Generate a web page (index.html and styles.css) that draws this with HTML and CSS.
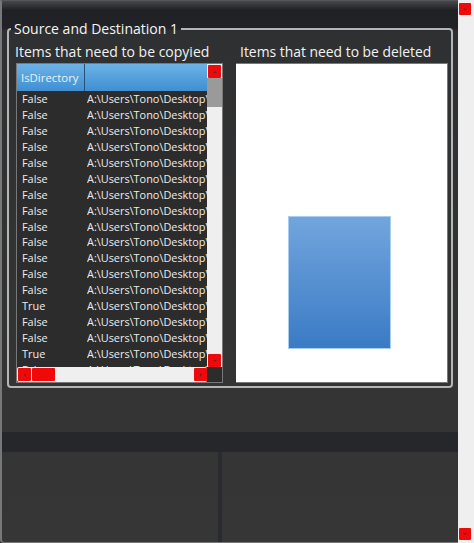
FILE: index.html
```html
<!DOCTYPE html>
<html lang="en">
<head>
<meta charset="utf-8">
<title>Source and Destination</title>
<link rel="stylesheet" href="styles.css">
</head>
<body>
<div class="window">
  <main class="pane">
    <fieldset class="group">
      <legend class="group-title">Source and Destination 1</legend>
      <section class="col col-left">
        <h2 class="col-title">Items that need to be copyied</h2>
        <div class="list">
          <div class="list-view">
            <div class="list-head">
              <div class="head-cell head-first">IsDirectory</div>
              <div class="head-cell head-rest"></div>
            </div>
            <div class="rows">
              <div class="row"><span class="c1">False</span><span class="c2">A:\Users\Tono\Desktop\</span></div>
              <div class="row"><span class="c1">False</span><span class="c2">A:\Users\Tono\Desktop\</span></div>
              <div class="row"><span class="c1">False</span><span class="c2">A:\Users\Tono\Desktop\</span></div>
              <div class="row"><span class="c1">False</span><span class="c2">A:\Users\Tono\Desktop\</span></div>
              <div class="row"><span class="c1">False</span><span class="c2">A:\Users\Tono\Desktop\</span></div>
              <div class="row"><span class="c1">False</span><span class="c2">A:\Users\Tono\Desktop\</span></div>
              <div class="row"><span class="c1">False</span><span class="c2">A:\Users\Tono\Desktop\</span></div>
              <div class="row"><span class="c1">False</span><span class="c2">A:\Users\Tono\Desktop\</span></div>
              <div class="row"><span class="c1">False</span><span class="c2">A:\Users\Tono\Desktop\</span></div>
              <div class="row"><span class="c1">False</span><span class="c2">A:\Users\Tono\Desktop\</span></div>
              <div class="row"><span class="c1">False</span><span class="c2">A:\Users\Tono\Desktop\</span></div>
              <div class="row"><span class="c1">False</span><span class="c2">A:\Users\Tono\Desktop\</span></div>
              <div class="row"><span class="c1">False</span><span class="c2">A:\Users\Tono\Desktop\</span></div>
              <div class="row"><span class="c1">True</span><span class="c2">A:\Users\Tono\Desktop\</span></div>
              <div class="row"><span class="c1">False</span><span class="c2">A:\Users\Tono\Desktop\</span></div>
              <div class="row"><span class="c1">False</span><span class="c2">A:\Users\Tono\Desktop\</span></div>
              <div class="row"><span class="c1">True</span><span class="c2">A:\Users\Tono\Desktop\</span></div>
              <div class="row"><span class="c1">False</span><span class="c2">A:\Users\Tono\Desktop\</span></div>
            </div>
            <div class="hbar">
              <span class="btn"><svg class="arrow" viewBox="0 0 6 6"><path d="M4 1 2 3l2 2z"/></svg></span>
              <span class="hthumb"></span>
              <span class="hspace"></span>
              <span class="btn"><svg class="arrow" viewBox="0 0 6 6"><path d="M2 1l2 2-2 2z"/></svg></span>
            </div>
          </div>
          <div class="list-side">
            <div class="vbar">
              <span class="btn"><svg class="arrow" viewBox="0 0 6 6"><path d="M1 4l2-2 2 2z"/></svg></span>
              <span class="vthumb"></span>
              <span class="vspace"></span>
              <span class="btn"><svg class="arrow" viewBox="0 0 6 6"><path d="M1 2l2 2 2-2z"/></svg></span>
            </div>
            <div class="corner"></div>
          </div>
        </div>
      </section>
      <section class="col col-right">
        <h2 class="col-title">Items that need to be deleted</h2>
        <div class="drop">
          <div class="drop-rect"></div>
        </div>
      </section>
    </fieldset>
  </main>
  <aside class="outer">
    <span class="btn btn-outer"><svg class="arrow" viewBox="0 0 6 6"><path d="M1 4l2-2 2 2z"/></svg></span>
    <span class="btn btn-outer"><svg class="arrow" viewBox="0 0 6 6"><path d="M1 2l2 2 2-2z"/></svg></span>
  </aside>
</div>
</body>
</html>
```

FILE: styles.css
```css
html, body {
  margin: 0;
  padding: 0;
  height: 100%;
  background: #3a3a3a;
}

body {
  font-family: "Open Sans", "Noto Sans", sans-serif;
  color: #f0f0f0;
  overflow: hidden;
}

.window {
  display: flex;
  width: 474px;
  height: 543px;
}

.pane {
  flex: 1;
  min-width: 0;
  box-sizing: border-box;
  padding: 18px 5px 0 5px;
  border-left: 2px solid #77787a;
  border-top: 1px solid #55575a;
  border-bottom: 1px solid #77787a;
  border-bottom-left-radius: 4px;
  background:
    linear-gradient(#26272b, #26272b) 0 431px / 100% 20px no-repeat,
    linear-gradient(#2a2b2f, #2a2b2f) 216px 451px / 4px 100% no-repeat,
    linear-gradient(#46474a 0, #3a3b3e 3px, #1f2124 9px, #202225 27px, #2f3031 30px, #343434 400px, #363636 100%);
}

.group {
  display: flex;
  gap: 13px;
  margin: 0;
  padding: 0 3px 3px 7px;
  height: 369px;
  box-sizing: border-box;
  border: 2px solid #b4b5b6;
  border-radius: 4px;
  min-width: 0;
  background: transparent;
}

.group-title {
  padding: 0 3px;
  margin-left: -5px;
  font-size: 14px;
  line-height: 20px;
  color: #f4f4f4;
}

.col {
  display: flex;
  flex-direction: column;
  min-width: 0;
}

.col-left {
  width: 207px;
}

.col-right {
  flex: 1;
}

.col-title {
  margin: 0;
  height: 24px;
  font-size: 14px;
  font-weight: 400;
  line-height: 26px;
  color: #f2f2f2;
  white-space: nowrap;
}

.col-left .col-title {
  margin-left: -1px;
}

.col-right .col-title {
  margin-left: 4px;
  font-size: 13.9px;
}

.list {
  flex: 1;
  display: flex;
  min-height: 0;
  border: 1px solid #77787a;
  background: #2c2c2c;
}

.list-view {
  flex: 1;
  min-width: 0;
  display: flex;
  flex-direction: column;
}

.list-head {
  display: flex;
  height: 27px;
  flex: none;
  background: linear-gradient(#6cb2e6, #3f8fd2);
}

.head-cell {
  font-size: 11.4px;
  line-height: 27px;
  color: #e8f2fa;
  box-sizing: border-box;
}

.head-first {
  width: 68px;
  padding-left: 4px;
  border-right: 1px solid #26527a;
}

.head-rest {
  flex: 1;
}

.rows {
  flex: 1;
  min-height: 0;
  overflow: hidden;
}

.row {
  display: flex;
  height: 15.95px;
  font-size: 10.9px;
  line-height: 16px;
  color: #ececec;
  white-space: nowrap;
}

.c1 {
  flex: none;
  width: 70px;
  padding-left: 5px;
  box-sizing: border-box;
}

.c2 {
  flex: 1;
  min-width: 0;
  overflow: hidden;
}

.hbar {
  flex: none;
  height: 15px;
  display: flex;
  align-items: center;
  gap: 1px;
  padding-left: 1px;
  background: #efefef;
  border-radius: 2px;
}

.list-side {
  flex: none;
  width: 15px;
  display: flex;
  flex-direction: column;
}

.vbar {
  display: flex;
  flex-direction: column;
  align-items: center;
  background: #efefef;
  flex: 1;
  min-height: 0;
  padding: 1px 0 0;
  box-sizing: border-box;
}

.corner {
  flex: none;
  height: 15px;
  background: #2c2c2c;
}

.btn {
  flex: none;
  display: flex;
  align-items: center;
  justify-content: center;
  width: 13px;
  height: 13px;
  background: #ee0a0a;
  border-radius: 1px;
}

.arrow {
  width: 6px;
  height: 6px;
  fill: #6b2626;
}

.vthumb {
  flex: none;
  width: 15px;
  height: 29px;
  background: #9a9a9a;
}

.vspace,
.hspace {
  flex: 1;
}

.hthumb {
  flex: none;
  width: 23px;
  height: 13px;
  background: #ee0a0a;
  border-radius: 1px;
}

.drop {
  flex: 1;
  min-height: 0;
  display: flex;
  align-items: flex-end;
  justify-content: center;
  padding: 0 4px 33px 0;
  background: #fff;
  border: 1px solid #77787a;
  border-width: 1px 1px 1px 0;
}

.drop-rect {
  width: 103px;
  height: 133px;
  box-sizing: border-box;
  background: linear-gradient(#72a5dd, #3a7bc5);
  border: 1px solid #a9cdef;
}

.outer {
  flex: none;
  width: 16px;
  box-sizing: border-box;
  display: flex;
  flex-direction: column;
  justify-content: space-between;
  padding: 3px 0 3px 1px;
  background: #efefef;
}

.btn-outer {
  width: 12px;
  height: 12px;
}
```
